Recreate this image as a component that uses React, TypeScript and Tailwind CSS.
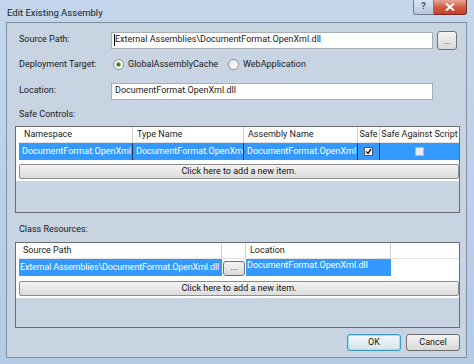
import React from 'react';

const font = { fontFamily: 'Roboto, "Liberation Sans", sans-serif' };

function DotsButton({ className }: { className: string }) {
  return (
    <div
      className={`flex items-end justify-center pb-[3px] rounded-[3px] border border-[#707070] bg-gradient-to-b from-[#f4f4f4] to-[#d9d9d9] text-[9px] leading-none text-[#333] ${className}`}
    >
      ...
    </div>
  );
}

function AddButton() {
  return (
    <div className="h-[15px] flex items-center justify-center rounded-[2px] border border-[#8c8c8c] bg-gradient-to-b from-[#f3f3f3] to-[#dcdcdc] text-[#111]">
      Click here to add a new item.
    </div>
  );
}

function Radio({ on }: { on: boolean }) {
  return (
    <div className="w-[11px] h-[11px] rounded-full border border-[#8b9097] bg-gradient-to-br from-[#e6e6e6] to-[#ffffff] flex items-center justify-center">
      {on && <div className="w-[5px] h-[5px] rounded-full bg-[#3b6b2e] border border-[#8fc27a]" />}
    </div>
  );
}

export default function App() {
  return (
    <div
      className="w-[474px] h-[364px] flex flex-col bg-gradient-to-b from-[#c3d6ec] to-[#b4cbe6] text-[9px] text-[#1a1a1a] overflow-hidden whitespace-nowrap"
      style={font}
    >
      {/* Title bar */}
      <div className="h-[22px] flex items-start relative">
        <span className="ml-[7px] mt-[6px] text-[9.5px] text-[#1b1b1b]">Edit Existing Assembly</span>
        <div className="absolute top-0 right-[7px] flex">
          <div className="w-[21px] h-[15px] rounded-bl-[3px] border border-t-0 border-[#6e7f93] bg-gradient-to-b from-[#dbe5f1] to-[#b5c6da] flex items-center justify-center text-[9px] font-bold text-[#44576e]">
            ?
          </div>
          <div className="w-[33px] h-[15px] rounded-br-[3px] border border-t-0 border-l-0 border-[#7a2a20] bg-gradient-to-b from-[#e8a597] via-[#d15c45] to-[#c3412b] flex items-center justify-center">
            <svg width="10" height="8" viewBox="0 0 10 8">
              <path d="M1 0.5 L9 7.5 M9 0.5 L1 7.5" stroke="#fff" strokeWidth="2" />
            </svg>
          </div>
        </div>
      </div>

      {/* Client area */}
      <div className="ml-[6px] mr-[7px] h-[336px] border border-[#7f8fa3] bg-[#c8d4e2] pl-[8px] pr-[7px] flex flex-col">
        <div className="h-[7px]" />
        <div className="h-[20px] flex items-center">
          <span className="ml-[4px] w-[92px]">Source Path:</span>
          <div className="w-[322px] h-[17px] bg-white border border-[#a7aeb8] flex items-center pl-[2px]">
            <div className="w-px h-[12px] bg-black" />
            <span>External Assemblies\DocumentFormat.OpenXml.dll</span>
          </div>
          <DotsButton className="ml-[4px] w-[20px] h-[19px]" />
        </div>
        <div className="h-[26px] flex items-center pt-[3px]">
          <span className="ml-[4px] w-[94px]">Deployment Target:</span>
          <Radio on />
          <span className="ml-[4px] w-[100px]">GlobalAssemblyCache</span>
          <Radio on={false} />
          <span className="ml-[4px]">WebApplication</span>
        </div>
        <div className="h-[28px] flex items-center pt-[2px]">
          <span className="ml-[4px] w-[92px]">Location:</span>
          <div className="w-[322px] h-[17px] bg-white border border-[#a7aeb8] flex items-center pl-[3px]">
            DocumentFormat.OpenXml.dll
          </div>
        </div>
        <div className="h-[20px] flex items-center pt-[1px]">
          <span className="ml-[4px]">Safe Controls:</span>
        </div>

        {/* Safe controls grid */}
        <div className="mt-[2px] w-[445px] h-[87px] border border-[#6b6f75] bg-[#c8d4e2]">
          <div className="bg-white pl-[3px] pb-[2px]">
            <div className="h-[16px] flex border-b border-[#e2e2e2] text-[#222]">
              <div className="w-[114px] pl-[5px] border-r border-[#d0d0d0] flex items-center">Namespace</div>
              <div className="w-[111px] pl-[4px] border-r border-[#d0d0d0] flex items-center">Type Name</div>
              <div className="w-[114px] pl-[4px] border-r border-[#d0d0d0] flex items-center">Assembly Name</div>
              <div className="w-[22px] border-r border-[#d0d0d0] flex items-center justify-center">Safe</div>
              <div className="flex-1 flex items-center justify-center">Safe Against Script</div>
            </div>
            <div className="h-[17px] flex bg-[#3399ff] text-white">
              <div className="w-[114px] pl-[3px] border-r border-[#17365e] flex items-center overflow-hidden">DocumentFormat.OpenXml</div>
              <div className="w-[111px] pl-[3px] border-r border-[#17365e] flex items-center overflow-hidden">DocumentFormat.OpenXml</div>
              <div className="w-[114px] pl-[3px] border-r border-[#17365e] flex items-center overflow-hidden">DocumentFormat.OpenXml</div>
              <div className="w-[22px] border-r border-[#17365e] flex items-center justify-center">
                <div className="w-[9px] h-[9px] bg-white border border-[#5a5a5a] flex items-center justify-center">
                  <svg width="7" height="7" viewBox="0 0 7 7">
                    <path d="M1 3.5 L3 5.5 L6 1" stroke="#1a1a1a" strokeWidth="1.4" fill="none" />
                  </svg>
                </div>
              </div>
              <div className="flex-1 flex items-center justify-center">
                <div className="w-[9px] h-[9px] bg-[#e9e9e9] border border-[#b9b9b9]" />
              </div>
            </div>
            <div className="h-[4px]" />
            <AddButton />
          </div>
        </div>

        <div className="mt-[7px] h-[20px] flex items-center">
          <span className="ml-[4px]">Class Resources:</span>
        </div>

        {/* Class resources grid */}
        <div className="mt-[2px] w-[445px] h-[86px] border border-[#6b6f75] bg-[#c8d4e2]">
          <div className="bg-white pl-[3px] pb-[2px]">
            <div className="h-[16px] flex border-b border-[#e2e2e2] text-[#222]">
              <div className="w-[203px] pl-[4px] border-r border-[#d0d0d0] flex items-center">Source Path</div>
              <div className="w-[24px] border-r border-[#d0d0d0]" />
              <div className="w-[145px] pl-[4px] border-r border-[#d0d0d0] flex items-center">Location</div>
              <div className="flex-1" />
            </div>
            <div className="h-[17px] flex">
              <div className="w-[203px] pl-[1px] bg-[#3399ff] text-white flex items-center overflow-hidden tracking-[-0.15px]">External Assemblies\DocumentFormat.OpenXml.dll</div>
              <div className="w-[24px] flex items-end">
                <DotsButton className="ml-px w-[22px] h-[15px]" />
              </div>
              <div className="w-[145px] pl-[1px] bg-[#3399ff] text-white flex items-start">DocumentFormat.OpenXml.dll</div>
              <div className="flex-1" />
            </div>
            <div className="h-[5px]" />
            <AddButton />
          </div>
        </div>

        <div className="mt-[6px] flex justify-end gap-[5px] w-[445px]">
          <div className="w-[54px] h-[17px] rounded-[3px] border border-[#3c9bc4] bg-gradient-to-b from-[#f2f7fa] to-[#d7e3ea] flex items-center justify-center shadow-[inset_0_0_0_1px_#9fe0f5]">
            OK
          </div>
          <div className="w-[54px] h-[17px] rounded-[3px] border border-[#707070] bg-gradient-to-b from-[#f3f3f3] to-[#d9d9d9] flex items-center justify-center">
            Cancel
          </div>
        </div>
      </div>
    </div>
  );
}
